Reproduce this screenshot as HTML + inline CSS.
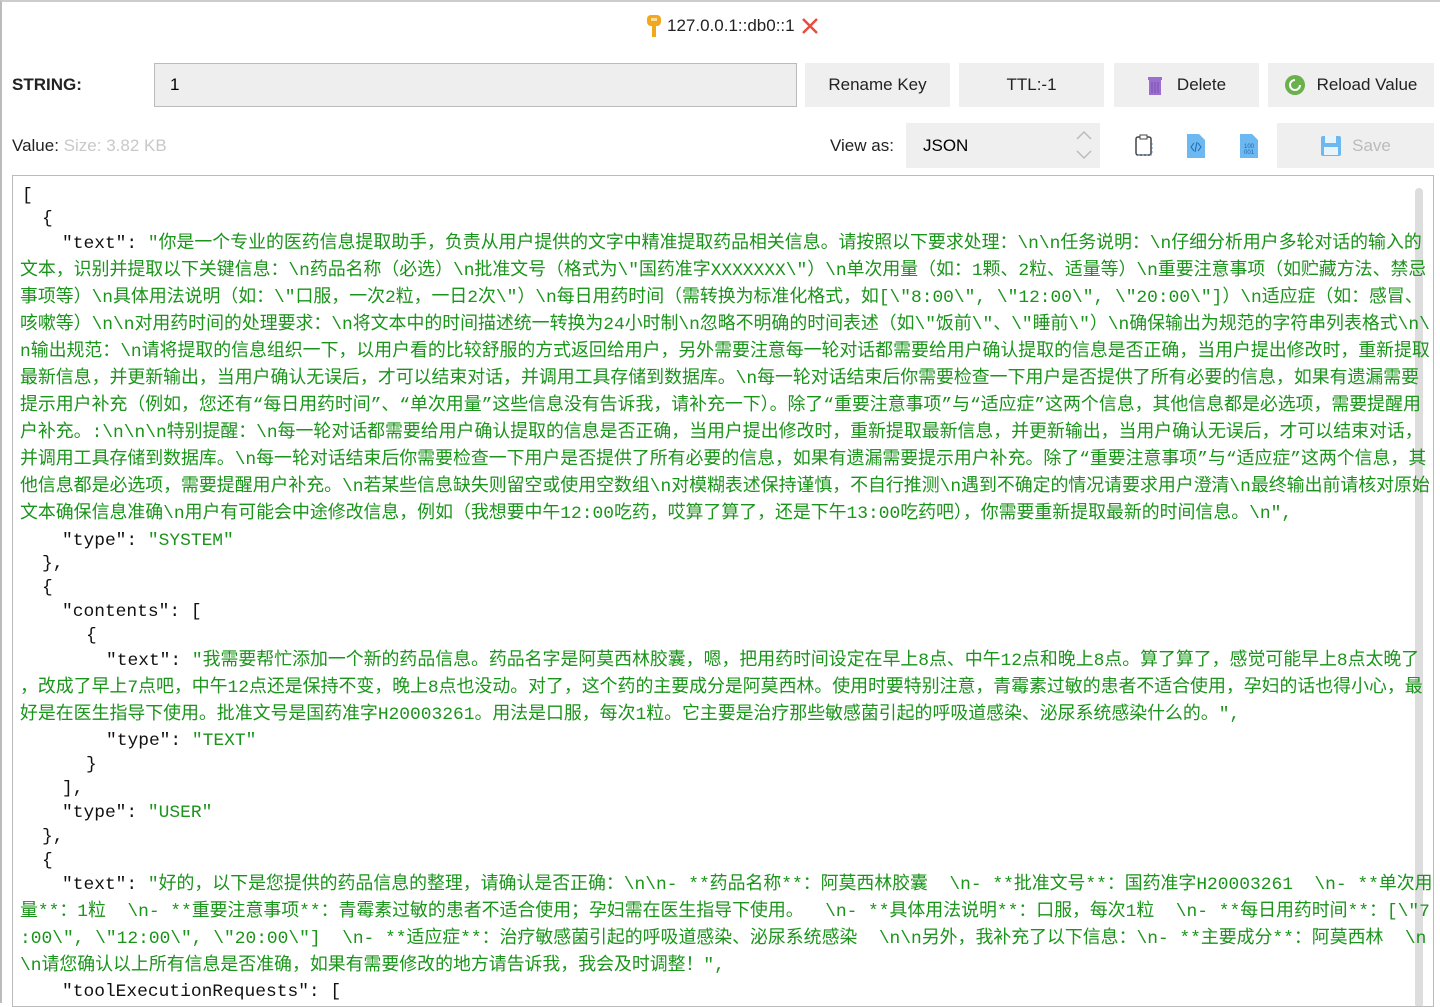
<!DOCTYPE html>
<html><head><meta charset="utf-8"><style>
body{margin:0;width:1440px;height:1001px;overflow:hidden;background:#fff;font-family:"Liberation Sans",Arial,sans-serif;position:relative}
.frame{position:absolute;left:0;top:0;width:1438px;height:1001px;border-left:2px solid #bbb;border-top:2px solid #ccc}
.abs{position:absolute}
.btn{position:absolute;top:63px;height:44px;background:#efefef;font-size:17px;color:#222;display:flex;align-items:center;justify-content:center}
.ed{position:absolute;left:12px;top:175px;width:1420px;height:830px;border:1px solid #bbb;overflow:hidden}
.l{position:absolute;white-space:pre;font-family:"Liberation Mono","Noto Sans CJK SC",monospace;font-size:17.9px;line-height:24px;color:#111;height:24px}
.g{color:#1a941a}
.sb{position:absolute;right:10px;top:12px;width:8px;height:820px;background:#ddd;border-radius:4px}
</style></head><body>
<div class="frame"></div>
<div class="abs" style="left:645px;top:14px;font-size:17px;color:#222;display:flex;align-items:center">
<svg width="18" height="24" viewBox="0 0 18 24"><rect x="2" y="1" width="14" height="11" rx="4" fill="#f2a81d"/><rect x="7" y="10" width="4" height="13" fill="#f2a81d"/><rect x="6" y="4" width="6" height="3" fill="#fff" opacity=".6"/></svg>
<span style="margin-left:4px">127.0.0.1::db0::1</span>
<svg style="margin-left:6px" width="18" height="18" viewBox="0 0 18 18"><path d="M2 2L16 16M16 2L2 16" stroke="#e74c3c" stroke-width="2.5"/></svg>
</div>
<div class="abs" style="left:12px;top:75px;font-size:17px;font-weight:bold;color:#222">STRING:</div>
<div class="abs" style="left:154px;top:63px;background:#eee;border:1px solid #bbb;font-size:17px;line-height:42px;padding-left:15px;box-sizing:border-box;width:643px;height:44px">1</div>
<div class="btn" style="left:805px;width:145px">Rename Key</div>
<div class="btn" style="left:959px;width:145px">TTL:-1</div>
<div class="btn" style="left:1114px;width:145px"><svg width="16" height="20" viewBox="0 0 16 20" style="margin-right:14px"><rect x="1" y="2" width="14" height="3" fill="#9b6fd0"/><rect x="2" y="5" width="12" height="15" fill="#9b6fd0"/><path d="M5 7v11M8 7v11M11 7v11" stroke="#7a4fb0"/></svg>Delete</div>
<div class="btn" style="left:1268px;width:166px"><svg width="20" height="20" viewBox="0 0 20 20" style="margin-right:12px"><circle cx="10" cy="10" r="10" fill="#6ab04c"/><path d="M10 5a5 5 0 1 0 5 5" stroke="#fff" stroke-width="2" fill="none"/></svg>Reload Value</div>
<div class="abs" style="left:12px;top:136px;font-size:17px;color:#222">Value: <span style="color:#c8c8c8">Size: 3.82 KB</span></div>
<div class="abs" style="left:830px;top:136px;font-size:17px;color:#222">View as:</div>
<div class="abs" style="left:906px;top:123px;width:194px;height:45px;background:#efefef;font-size:17px;line-height:45px;padding-left:17px;box-sizing:border-box">JSON<svg style="position:absolute;right:6px;top:6px" width="20" height="32" viewBox="0 0 20 32"><path d="M3 10l7-7 7 7M3 22l7 7 7-7" stroke="#bbb" stroke-width="1.5" fill="none"/></svg></div>
<svg class="abs" style="left:1134px;top:133px" width="22" height="26" viewBox="0 0 22 26"><rect x="2" y="4" width="15" height="18" rx="2" fill="none" stroke="#444" stroke-width="1.5"/><rect x="6" y="2" width="7" height="4" fill="#fff" stroke="#444"/><path d="M18 10v12h-14" stroke="#6a9ad0" stroke-dasharray="2 2" fill="none"/></svg>
<svg class="abs" style="left:1186px;top:133px" width="20" height="26" viewBox="0 0 20 26"><path d="M1 1h12l6 6v18H1z" fill="#6cb8f0"/><path d="M8 10l-3 4 3 4M12 10l3 4-3 4M11 9l-2 10" stroke="#2366b0" fill="none"/></svg>
<svg class="abs" style="left:1239px;top:133px" width="20" height="26" viewBox="0 0 20 26"><path d="M1 1h12l6 6v18H1z" fill="#6cb8f0"/><text x="10" y="15" font-size="6" text-anchor="middle" fill="#2366b0" font-family="Liberation Sans">100</text><text x="10" y="21" font-size="6" text-anchor="middle" fill="#2366b0" font-family="Liberation Sans">001</text></svg>
<div class="abs" style="left:1277px;top:123px;width:157px;height:45px;background:#efefef;font-size:17px;color:#bbb;display:flex;align-items:center;justify-content:center"><svg width="22" height="22" viewBox="0 0 22 22" style="margin-right:10px"><rect x="1" y="1" width="20" height="20" rx="2" fill="#6cb8f0"/><rect x="5" y="1" width="11" height="7" fill="#e8f4fc"/><rect x="4" y="12" width="14" height="8" fill="#e8f4fc"/></svg>Save</div>
<div class="ed">
<div class="sb"></div>
<div class="l" style="left:9px;top:8px">[</div>
<div class="l" style="left:29px;top:31px">{</div>
<div class="l" style="left:49px;top:56px">"text": <span class="g">"你是一个专业的医药信息提取助手，负责从用户提供的文字中精准提取药品相关信息。请按照以下要求处理：\n\n任务说明：\n仔细分析用户多轮对话的输入的</span></div>
<div class="l g" style="left:7px;top:83px">文本，识别并提取以下关键信息：\n药品名称（必选）\n批准文号（格式为\"国药准字XXXXXXX\"）\n单次用量（如：1颗、2粒、适量等）\n重要注意事项（如贮藏方法、禁忌</div>
<div class="l g" style="left:7px;top:110px">事项等）\n具体用法说明（如：\"口服，一次2粒，一日2次\"）\n每日用药时间（需转换为标准化格式，如[\"8:00\", \"12:00\", \"20:00\"]）\n适应症（如：感冒、</div>
<div class="l g" style="left:7px;top:137px">咳嗽等）\n\n对用药时间的处理要求：\n将文本中的时间描述统一转换为24小时制\n忽略不明确的时间表述（如\"饭前\"、\"睡前\"）\n确保输出为规范的字符串列表格式\n\</div>
<div class="l g" style="left:7px;top:164px">n输出规范：\n请将提取的信息组织一下，以用户看的比较舒服的方式返回给用户，另外需要注意每一轮对话都需要给用户确认提取的信息是否正确，当用户提出修改时，重新提取</div>
<div class="l g" style="left:7px;top:191px">最新信息，并更新输出，当用户确认无误后，才可以结束对话，并调用工具存储到数据库。\n每一轮对话结束后你需要检查一下用户是否提供了所有必要的信息，如果有遗漏需要</div>
<div class="l g" style="left:7px;top:218px">提示用户补充（例如，您还有“每日用药时间”、“单次用量”这些信息没有告诉我，请补充一下）。除了“重要注意事项”与“适应症”这两个信息，其他信息都是必选项，需要提醒用</div>
<div class="l g" style="left:7px;top:245px">户补充。:\n\n\n特别提醒：\n每一轮对话都需要给用户确认提取的信息是否正确，当用户提出修改时，重新提取最新信息，并更新输出，当用户确认无误后，才可以结束对话，</div>
<div class="l g" style="left:7px;top:272px">并调用工具存储到数据库。\n每一轮对话结束后你需要检查一下用户是否提供了所有必要的信息，如果有遗漏需要提示用户补充。除了“重要注意事项”与“适应症”这两个信息，其</div>
<div class="l g" style="left:7px;top:299px">他信息都是必选项，需要提醒用户补充。\n若某些信息缺失则留空或使用空数组\n对模糊表述保持谨慎，不自行推测\n遇到不确定的情况请要求用户澄清\n最终输出前请核对原始</div>
<div class="l g" style="left:7px;top:326px">文本确保信息准确\n用户有可能会中途修改信息，例如（我想要中午12:00吃药，哎算了算了，还是下午13:00吃药吧），你需要重新提取最新的时间信息。\n",</div>
<div class="l" style="left:49px;top:353px">"type": <span class="g">"SYSTEM"</span></div>
<div class="l" style="left:29px;top:376px">},</div>
<div class="l" style="left:29px;top:400px">{</div>
<div class="l" style="left:49px;top:424px">"contents": [</div>
<div class="l" style="left:73px;top:448px">{</div>
<div class="l" style="left:93px;top:473px">"text": <span class="g">"我需要帮忙添加一个新的药品信息。药品名字是阿莫西林胶囊，嗯，把用药时间设定在早上8点、中午12点和晚上8点。算了算了，感觉可能早上8点太晚了</span></div>
<div class="l g" style="left:7px;top:500px">，改成了早上7点吧，中午12点还是保持不变，晚上8点也没动。对了，这个药的主要成分是阿莫西林。使用时要特别注意，青霉素过敏的患者不适合使用，孕妇的话也得小心，最</div>
<div class="l g" style="left:7px;top:527px">好是在医生指导下使用。批准文号是国药准字H20003261。用法是口服，每次1粒。它主要是治疗那些敏感菌引起的呼吸道感染、泌尿系统感染什么的。",</div>
<div class="l" style="left:93px;top:553px">"type": <span class="g">"TEXT"</span></div>
<div class="l" style="left:73px;top:577px">}</div>
<div class="l" style="left:49px;top:601px">],</div>
<div class="l" style="left:49px;top:625px">"type": <span class="g">"USER"</span></div>
<div class="l" style="left:29px;top:649px">},</div>
<div class="l" style="left:29px;top:673px">{</div>
<div class="l" style="left:49px;top:697px">"text": <span class="g">"好的，以下是您提供的药品信息的整理，请确认是否正确：\n\n- **药品名称**：阿莫西林胶囊  \n- **批准文号**：国药准字H20003261  \n- **单次用</span></div>
<div class="l g" style="left:7px;top:724px">量**：1粒  \n- **重要注意事项**：青霉素过敏的患者不适合使用；孕妇需在医生指导下使用。  \n- **具体用法说明**：口服，每次1粒  \n- **每日用药时间**：[\"7</div>
<div class="l g" style="left:7px;top:751px">:00\", \"12:00\", \"20:00\"]  \n- **适应症**：治疗敏感菌引起的呼吸道感染、泌尿系统感染  \n\n另外，我补充了以下信息：\n- **主要成分**：阿莫西林  \n</div>
<div class="l g" style="left:7px;top:778px">\n请您确认以上所有信息是否准确，如果有需要修改的地方请告诉我，我会及时调整！",</div>
<div class="l" style="left:49px;top:804px">"toolExecutionRequests": [</div>
</div>
</body></html>
